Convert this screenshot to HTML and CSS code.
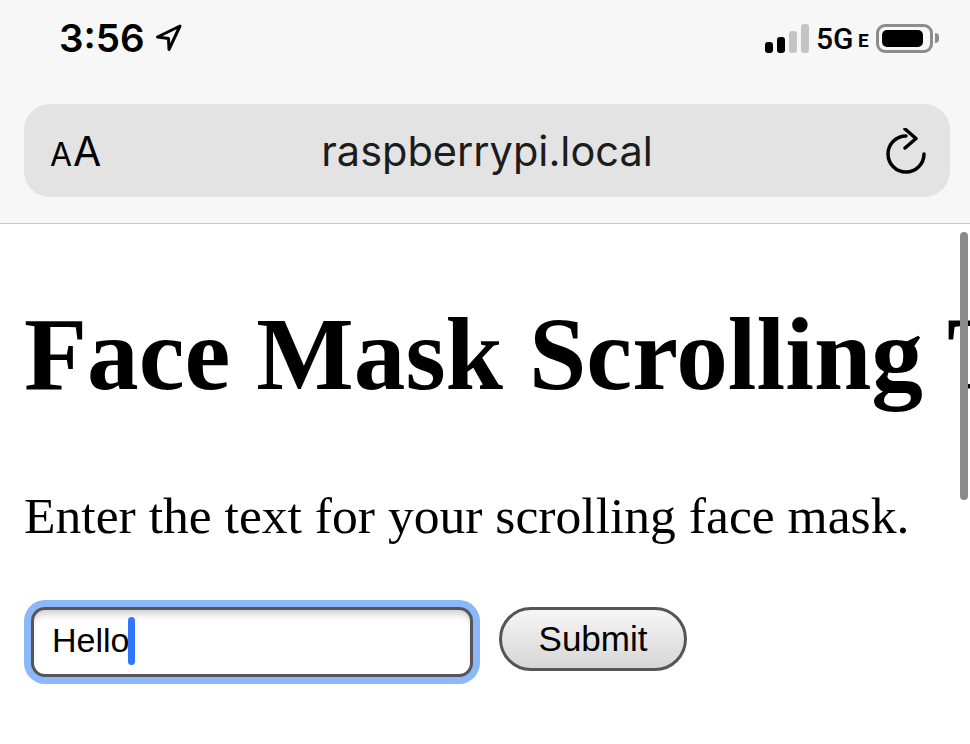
FILE: index.html
```html
<!DOCTYPE html>
<html lang="en">
<head>
    <meta charset="UTF-8">
    <meta name="viewport" content="width=device-width, initial-scale=1.0">
    <title>Face Mask Scrolling Text</title>
    <link rel="stylesheet" href="styles.css">
</head>
<body>
    <!-- Phone status bar and address bar -->
    <header class="chrome">
        <div class="status">
            <div class="status-left">
                <span class="time">3:56</span>
                <svg class="location" width="27" height="28" viewBox="0 0 27 28">
                    <path d="M25 2 L2.500 13 L13.500 14.500 L14 25.500 Z" fill="none" stroke="#000" stroke-width="3" stroke-linejoin="round"/>
                </svg>
            </div>
            <div class="status-right">
                <svg class="signal" width="45" height="29" viewBox="0 0 45 29">
                    <rect x="0" y="18" width="8" height="11" rx="3" fill="#000"/>
                    <rect x="12" y="13" width="8" height="16" rx="3" fill="#000"/>
                    <rect x="24" y="7" width="8" height="22" rx="3" fill="#c4c4c4"/>
                    <rect x="36" y="0" width="8" height="29" rx="3" fill="#c4c4c4"/>
                </svg>
                <span class="network">5G</span>
                <span class="network-e">E</span>
                <div class="battery"><div class="battery-fill"></div></div>
                <div class="battery-nub"></div>
            </div>
        </div>
        <div class="urlbar">
            <span class="aa"><small>A</small>A</span>
            <span class="url">raspberrypi.local</span>
            <svg class="reload" width="42" height="50" viewBox="0 0 42 50">
                <path d="M20 8 A18 18 0 1 0 38 26" fill="none" stroke="#000" stroke-width="3.500" stroke-linecap="round"/>
                <path d="M19 1 L30 10.500 L19 20" fill="none" stroke="#000" stroke-width="3.500" stroke-linecap="round" stroke-linejoin="round"/>
            </svg>
        </div>
    </header>

    <main class="page">
        <h1>Face Mask Scrolling Text</h1>
        <p>Enter the text for your scrolling face mask.</p>
        <form class="mask-form">
            <div class="field">
                <input type="text" value="Hello">
                <span class="caret"></span>
            </div>
            <button type="button">Submit</button>
        </form>
    </main>

    <div class="scrollbar"></div>
</body>
</html>
```

FILE: styles.css
```css
html, body {
    height: 100%;
}
body {
    margin: 0;
    background: #fff;
    color: #000;
    overflow: hidden;
    position: relative;
}
.chrome {
    height: 223px;
    background: #f7f7f7;
    border-bottom: 1px solid #c8c8c8;
    padding: 0 20px 0 24px;
    font-family: "Inter", sans-serif;
}
.status {
    height: 104px;
    display: flex;
    justify-content: space-between;
    align-items: flex-start;
}
.status-left {
    display: flex;
    align-items: center;
    padding: 18px 0 0 35px;
}
.time {
    font-size: 38.500px;
    line-height: 40px;
    font-weight: 600;
}
.location {
    margin-left: 10px;
}
.status-right {
    display: flex;
    align-items: center;
    padding: 23px 11px 0 0;
    height: 30px;
}
.signal {
    margin-right: 6px;
}
.network {
    font-family: "Roboto", sans-serif;
    font-size: 30px;
    font-weight: 500;
    line-height: 30px;
    padding-top: 1px;
    width: 42px;
}
.network-e {
    font-family: "Roboto", sans-serif;
    font-size: 19px;
    font-weight: 700;
    line-height: 30px;
    padding-top: 6px;
    width: 18px;
}
.battery {
    width: 57px;
    height: 29px;
    box-sizing: border-box;
    border: 3px solid #8c8c8c;
    border-radius: 9px;
    padding: 3px;
}
.battery-fill {
    width: 41px;
    height: 100%;
    background: #000;
    border-radius: 5px;
}
.battery-nub {
    width: 4px;
    height: 10px;
    margin-left: 2px;
    background: #8c8c8c;
    border-radius: 0 4px 4px 0;
}
.urlbar {
    height: 93px;
    width: 926px;
    background: #e3e3e3;
    border-radius: 26px;
    display: grid;
    grid-template-columns: 1fr auto 1fr;
    align-items: center;
    padding: 0 26px;
    box-sizing: border-box;
}
.aa {
    font-size: 41px;
}
.aa small {
    font-size: 32px;
    margin-right: 1px;
}
.url {
    font-size: 41.500px;
    color: #1c1c1c;
}
.reload {
    justify-self: end;
    margin: 4px -4px 0 0;
}
.page {
    padding: 0 24px;
    font-family: "Liberation Serif", serif;
    white-space: nowrap;
}
h1 {
    margin: 0;
    padding-top: 75px;
    font-size: 103.300px;
    line-height: 110px;
    font-weight: bold;
}
p {
    margin: 0;
    padding-top: 76px;
    font-size: 51.600px;
    line-height: 62px;
}
.mask-form {
    display: flex;
    align-items: flex-start;
    margin-top: 60px;
    padding-left: 7px;
    font-family: "Liberation Sans", sans-serif;
}
.field {
    position: relative;
}
input {
    display: block;
    width: 442px;
    height: 70px;
    box-sizing: border-box;
    margin: 0;
    border: 3.500px solid #555;
    border-radius: 14px;
    padding: 0 18px 4px;
    background: #fff;
    box-shadow: 0 0 0 7px #8ab8fb, inset 0 7px 7px -3px #cfcfcf;
    font-family: inherit;
    font-size: 34px;
    color: #000;
    outline: none;
}
.caret {
    position: absolute;
    left: 97px;
    top: 10px;
    width: 7px;
    height: 48px;
    border-radius: 4px;
    background: #2f78fb;
}
button {
    width: 188px;
    height: 64px;
    margin-left: 26px;
    box-sizing: border-box;
    border: 3.500px solid #555;
    border-radius: 32px;
    background: linear-gradient(#f6f6f6, #d6d6d6);
    font-family: inherit;
    font-size: 35px;
    color: #000;
    padding: 0;
}
.scrollbar {
    position: absolute;
    left: 960px;
    top: 232px;
    width: 8px;
    height: 268px;
    border-radius: 4px;
    background: #8a8a8a;
}
```
